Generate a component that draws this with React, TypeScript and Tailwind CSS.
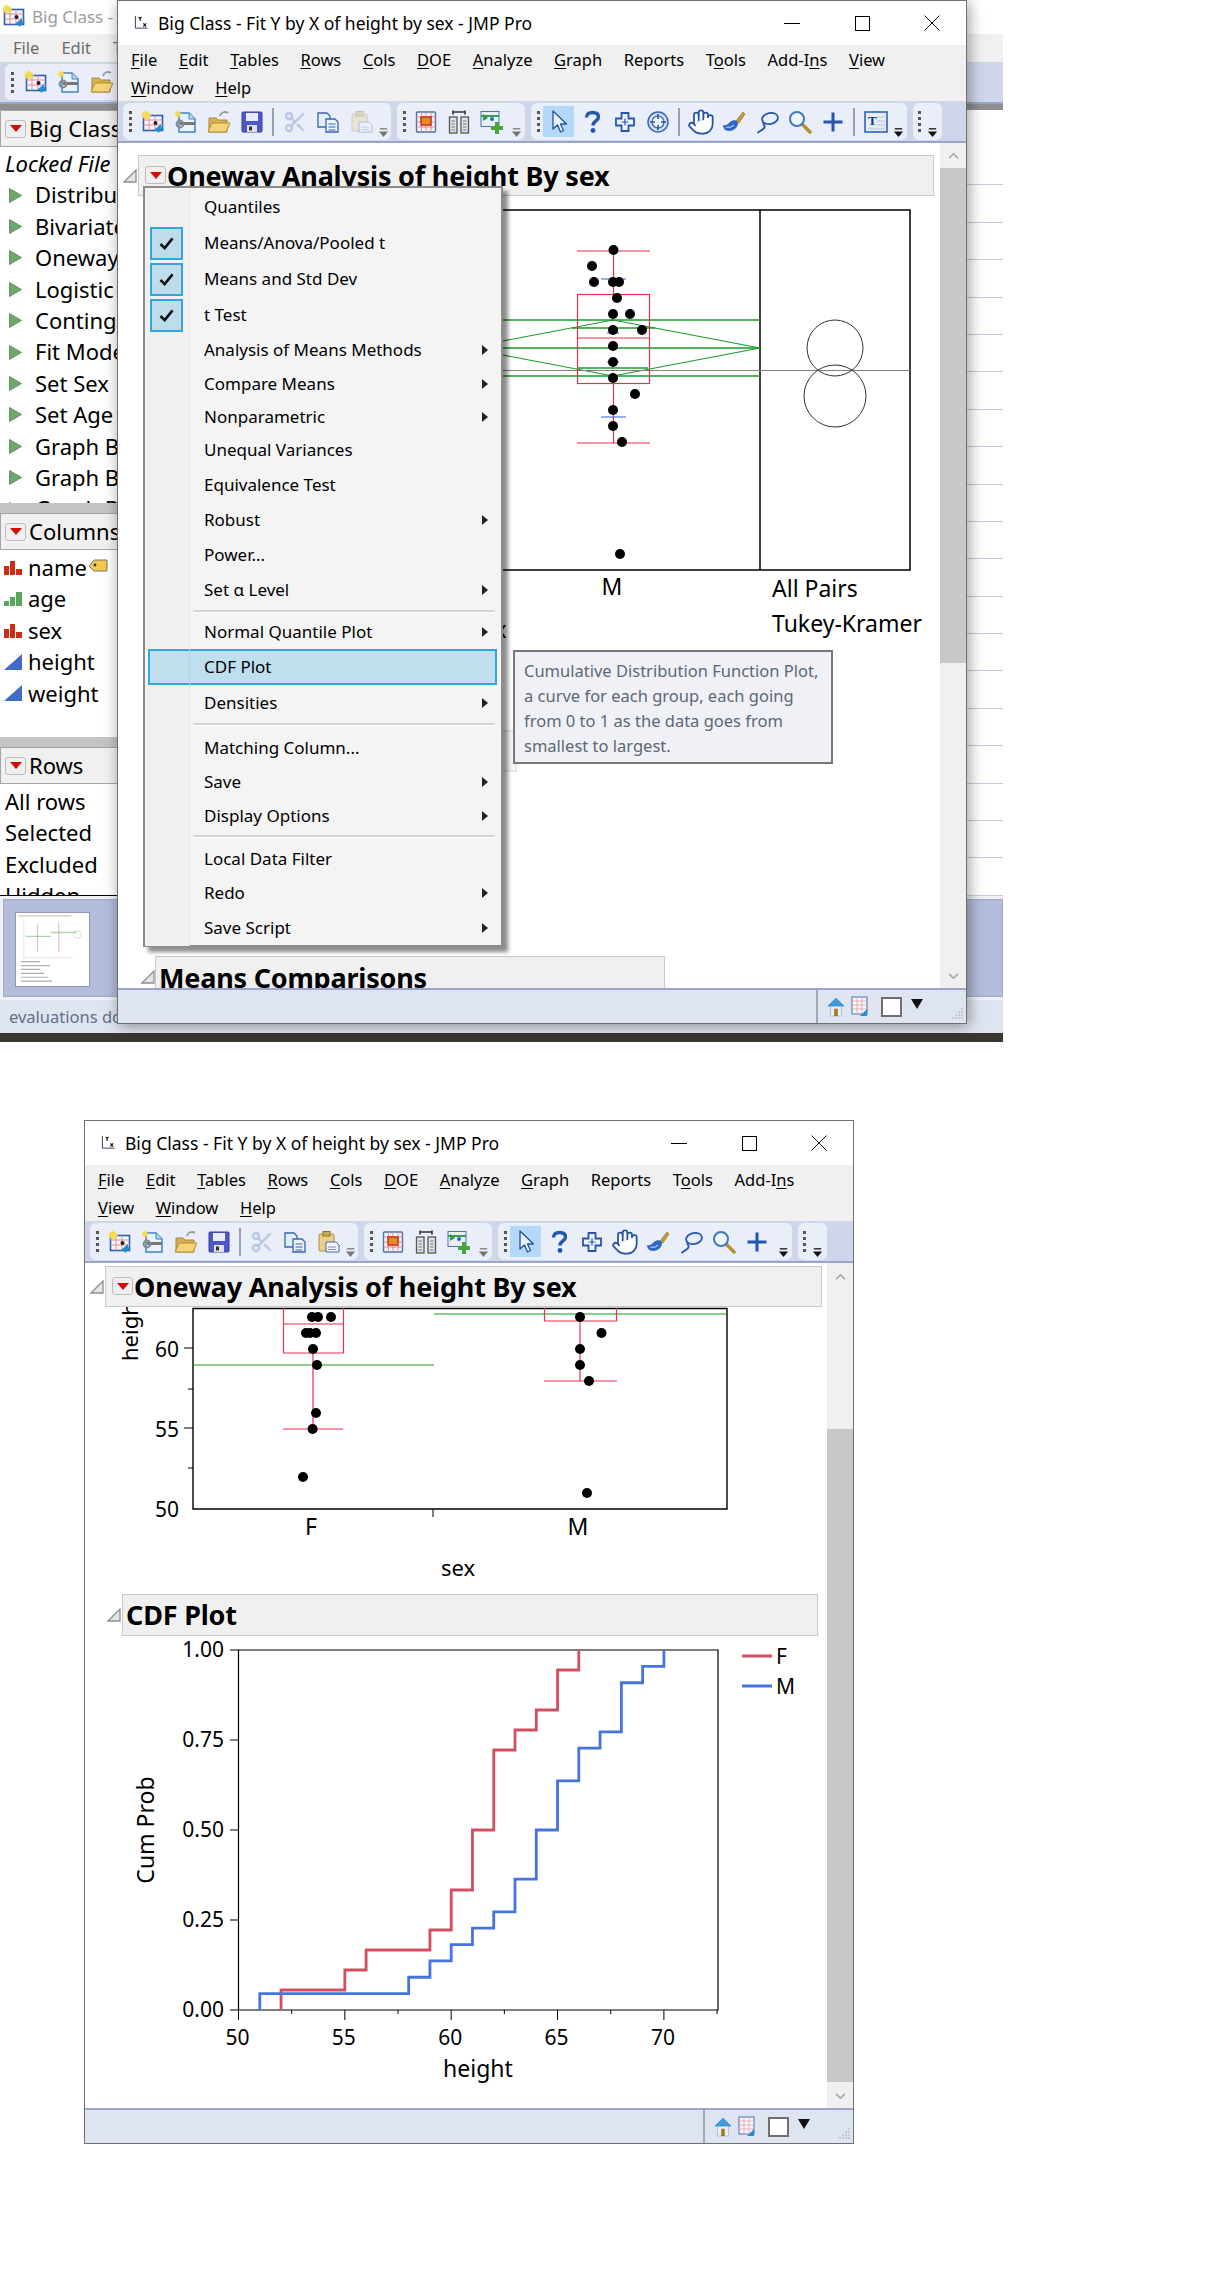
import type { ReactNode } from "react";
import { Hand, Scissors } from "lucide-react";

const uiFont = "font-['Noto_Sans',sans-serif]";

// ---------- toolbar icons ----------
function NewTableIcon() {
  return (
    <svg viewBox="0 0 24 24" className="w-6 h-6">
      <rect x="2.5" y="5.5" width="19" height="15" fill="#f4f6fb" stroke="#2a5fb0" strokeWidth="1.6" />
      <path d="M2.5 10h19M2.5 15h19M8 5.5v15M14 5.5v15" stroke="#e58a96" strokeWidth="1" />
      <circle cx="14.5" cy="13" r="2" fill="#222" />
      <path d="M13 20l7-6v3l3 1-6 5-1-3z" fill="#1f8fcf" />
      <path d="M5 0l1.4 2.6L9 1.5 8 4l2.5 1.3L8 6.5 9 9 6.4 7.9 5 10.5 3.6 7.9 1 9l1-2.5L0 5.3 2 4 1 1.5l2.6 1.1z" fill="#f6d94e" />
    </svg>
  );
}
function ImportIcon() {
  return (
    <svg viewBox="0 0 24 24" className="w-6 h-6">
      <path d="M5 3h10l6 6v13H5z" fill="#eaf2fb" stroke="#3b86c4" strokeWidth="1.5" />
      <path d="M15 3v6h6" fill="#bcd9f0" stroke="#3b86c4" strokeWidth="1" />
      <rect x="6" y="12" width="15" height="3" fill="#777" />
      <circle cx="6" cy="14" r="3.4" fill="none" stroke="#888" strokeWidth="2" />
      <path d="M4 0l1 2 2-1-1 2 2 1-2 1 1 2-2-1-1 2-1-2-2 1 1-2-2-1 2-1-1-2 2 1z" fill="#f6d94e" />
    </svg>
  );
}
function FolderIcon() {
  return (
    <svg viewBox="0 0 24 24" className="w-6 h-6">
      <path d="M13 6c1-4 5-5 8-3" fill="none" stroke="#9a9a9a" strokeWidth="1.8" />
      <path d="M2 8h7l2 2h9v12H2z" fill="#d9b04e" stroke="#a9883a" strokeWidth="1" />
      <path d="M1 22l4-9h18l-4 9z" fill="#f5d477" stroke="#b08d3a" strokeWidth="1" />
    </svg>
  );
}
function SaveIcon() {
  return (
    <svg viewBox="0 0 24 24" className="w-6 h-6">
      <rect x="2" y="2" width="20" height="20" rx="1" fill="#4f57c6" stroke="#3a3f9c" />
      <rect x="6" y="3" width="12" height="8" fill="#e9ecfb" />
      <rect x="7" y="15" width="10" height="7" fill="#dfe2ee" />
      <rect x="9" y="16.5" width="3" height="4" fill="#333" />
    </svg>
  );
}
function CopyIcon() {
  return (
    <svg viewBox="0 0 24 24" className="w-6 h-6">
      <path d="M2 3h9l3 3v11H2z" fill="#e5edf9" stroke="#3565b5" strokeWidth="1.3" />
      <path d="M10 9h9l3 3v10H10z" fill="#eef3fb" stroke="#3565b5" strokeWidth="1.3" />
      <path d="M12.5 14h7M12.5 17h7M12.5 20h7" stroke="#3565b5" strokeWidth="1.2" />
    </svg>
  );
}
function PasteIcon({ dim }: { dim: boolean }) {
  return (
    <svg viewBox="0 0 24 24" className={dim ? "w-6 h-6 opacity-35" : "w-6 h-6"}>
      <rect x="3" y="4" width="15" height="17" rx="1" fill="#e9cf8a" stroke="#a98d45" />
      <rect x="7" y="1.5" width="7" height="4.5" fill="#c8a956" stroke="#8b7336" />
      <path d="M10 12h10l3 3v7H10z" fill="#f2f4fa" stroke="#4a6aa8" />
      <path d="M12 17h8M12 19.5h8" stroke="#7f8fb5" />
    </svg>
  );
}
function DataViewIcon() {
  return (
    <svg viewBox="0 0 24 24" className="w-6 h-6">
      <rect x="2.5" y="2" width="19" height="20" rx="1" fill="#f3f3f8" stroke="#4a70b5" strokeWidth="1.4" />
      <path d="M2.5 7h19M2.5 12h19M2.5 17h19M7.5 2v20M12 2v20M17 2v20" stroke="#e28a90" strokeWidth="1" />
      <rect x="7" y="7" width="10" height="8" fill="#ea8a24" stroke="#c8321e" strokeWidth="1.5" />
    </svg>
  );
}
function ColumnsIcon() {
  return (
    <svg viewBox="0 0 24 24" className="w-6 h-6">
      <path d="M6 2h12M6 0.5v4M18 0.5v4" stroke="#333" strokeWidth="1.6" />
      <rect x="2.5" y="7" width="7.5" height="16" fill="#dfe3e8" stroke="#555" strokeWidth="1.3" />
      <rect x="14" y="7" width="7.5" height="16" fill="#dfe3e8" stroke="#555" strokeWidth="1.3" />
      <path d="M4.5 11h3.5M4.5 14h3.5M4.5 17h3.5M4.5 20h3.5M16 11h3.5M16 14h3.5M16 17h3.5M16 20h3.5" stroke="#777" />
    </svg>
  );
}
function AddDataIcon() {
  return (
    <svg viewBox="0 0 24 24" className="w-6 h-6">
      <rect x="1" y="1.5" width="18" height="15" fill="#e6eef8" stroke="#4a70b5" />
      <path d="M1 6h18" stroke="#3c9a4c" strokeWidth="2" />
      <path d="M3 4l5 4-5 3z" fill="#2f9a4a" />
      <circle cx="12" cy="9" r="2" fill="#1f6fb8" />
      <path d="M15 12h4v4h4v4h-4v4h-4v-4h-4v-4h4z" fill="#4aa53a" />
    </svg>
  );
}
function PointerIcon() {
  return (
    <svg viewBox="0 0 24 24" className="w-6 h-6">
      <path d="M6 1v18l4.5-4 3 7 3-1.5-3-6.5h6z" fill="#e8f1fb" stroke="#24529f" strokeWidth="1.3" strokeLinejoin="round" />
    </svg>
  );
}
function HelpIcon() {
  return (
    <svg viewBox="0 0 24 24" className="w-6 h-6">
      <path d="M6.5 7.5C6.5 4 9 2.5 12.5 2.5S18.5 4 18.5 7c0 4-5.5 4-5.5 8.5" fill="none" stroke="#2456ad" strokeWidth="3.4" />
      <circle cx="13" cy="20.5" r="2.4" fill="#2456ad" />
    </svg>
  );
}
function CrosshairIcon() {
  return (
    <svg viewBox="0 0 24 24" className="w-6 h-6">
      <path d="M8.5 3h7v5.5H21v7h-5.5V21h-7v-5.5H3v-7h5.5z" fill="#eef4fc" stroke="#2456ad" strokeWidth="1.8" />
      <path d="M8.5 12h7M12 8.5v7" stroke="#2456ad" strokeWidth="1.2" />
    </svg>
  );
}
function TargetIcon() {
  return (
    <svg viewBox="0 0 24 24" className="w-6 h-6">
      <circle cx="12" cy="12" r="10" fill="#cfe0f5" stroke="#3566b5" strokeWidth="1.5" />
      <circle cx="12" cy="12" r="6" fill="#f2f6fc" stroke="#3566b5" strokeWidth="1.2" />
      <path d="M12 4v5M12 15v5M4 12h5M15 12h5" stroke="#24529f" strokeWidth="1.6" />
    </svg>
  );
}
function BrushIcon() {
  return (
    <svg viewBox="0 0 24 24" className="w-6 h-6">
      <path d="M14 11L21 2l2 2-6 9z" fill="#c59a3a" stroke="#8c6b22" strokeWidth="0.6" />
      <path d="M1 15c3 1 5-1 7-3 3-3 8-2 8 1 0 5-5 8-9 8-4 0-6-3-6-6z" fill="#2d68c4" />
      <path d="M4 17c3 1 6 0 8-2" stroke="#a9c8ef" strokeWidth="1.2" fill="none" />
    </svg>
  );
}
function LassoIcon() {
  return (
    <svg viewBox="0 0 24 24" className="w-6 h-6">
      <ellipse cx="15" cy="8.5" rx="8" ry="5.5" fill="none" stroke="#2456ad" strokeWidth="1.8" transform="rotate(-12 15 8.5)" />
      <path d="M8.5 12c-1 3 2 3 1 5.5-1 2-4 3-7 5.5" fill="none" stroke="#2456ad" strokeWidth="1.8" />
    </svg>
  );
}
function MagnifierIcon() {
  return (
    <svg viewBox="0 0 24 24" className="w-6 h-6">
      <path d="M14 14l8 8" stroke="#b98f33" strokeWidth="3.6" strokeLinecap="round" />
      <circle cx="9" cy="9" r="7" fill="#eef5fc" stroke="#3f78c2" strokeWidth="2" />
    </svg>
  );
}
function PlusIcon() {
  return (
    <svg viewBox="0 0 24 24" className="w-6 h-6">
      <path d="M12 2.5v19M2.5 12h19" stroke="#2456ad" strokeWidth="3" />
    </svg>
  );
}
function TextBoxIcon() {
  return (
    <svg viewBox="0 0 24 24" className="w-6 h-6">
      <rect x="1" y="2" width="22" height="20" fill="#e3ecf7" stroke="#2f64b5" strokeWidth="1.6" />
      <path d="M13 7h8M13 11h8M13 15h8M4 19h17" stroke="#b8c8de" />
      <text x="4" y="15" fontSize="13" fontWeight="700" fill="#123a86" fontFamily="Liberation Serif, serif">T</text>
    </svg>
  );
}

function Grip() {
  return (
    <div className="w-[3px] mx-[1px] shrink-0 flex flex-col gap-[3px]">
      <div className="h-[3px] bg-[#555]" />
      <div className="h-[3px] bg-[#555]" />
      <div className="h-[3px] bg-[#555]" />
      <div className="h-[3px] bg-[#555]" />
    </div>
  );
}

function Overflow({ dark }: { dark: boolean }) {
  return (
    <svg viewBox="0 0 12 12" className="w-[11px] h-[11px] self-end mb-[2px]">
      <path d="M2 2h8" stroke={dark ? "#111" : "#777"} strokeWidth="1.4" />
      <path d="M1 5h10l-5 6z" fill={dark ? "#111" : "#777"} />
    </svg>
  );
}

function Slot({ children, active }: { children: ReactNode; active?: boolean }) {
  return (
    <div className={active ? "w-[31px] h-[31px] mx-[1px] flex items-center justify-center bg-[#b5d7f8]" : "w-[33px] h-[31px] flex items-center justify-center"}>
      {children}
    </div>
  );
}

function ToolSep() {
  return <div className="w-[2px] h-[28px] mx-[4px] bg-[#9aa0ad]" />;
}

function ToolGroup({ className, children }: { className: string; children: ReactNode }) {
  return <div className={`h-[37px] rounded-md bg-[#e9eef8] flex items-center ${className}`}>{children}</div>;
}

function Toolbar({ full }: { full: boolean }) {
  return (
    <div className="h-[42px] shrink-0 bg-[#cfd6ea] border-b-[2px] border-[#99a5cb] pt-[2px] flex gap-[6px] pl-[5px]">
      <ToolGroup className="w-[268px] pl-[5px]">
        <Grip />
        <div className="ml-[3px] flex items-center">
          <Slot><NewTableIcon /></Slot>
          <Slot><ImportIcon /></Slot>
          <Slot><FolderIcon /></Slot>
          <Slot><SaveIcon /></Slot>
          <ToolSep />
          <Slot><Scissors className="w-6 h-6 text-[#b9c8e6]" strokeWidth={2.4} /></Slot>
          <Slot><CopyIcon /></Slot>
          <Slot><PasteIcon dim={full} /></Slot>
        </div>
        <div className="ml-auto mr-[2px] self-stretch flex"><Overflow dark={false} /></div>
      </ToolGroup>
      <ToolGroup className="w-[128px] pl-[5px]">
        <Grip />
        <div className="ml-[2px] flex items-center">
          <Slot><DataViewIcon /></Slot>
          <Slot><ColumnsIcon /></Slot>
          <Slot><AddDataIcon /></Slot>
        </div>
        <div className="ml-auto mr-[3px] self-stretch flex"><Overflow dark={false} /></div>
      </ToolGroup>
      <ToolGroup className={full ? "w-[376px] pl-[5px]" : "w-[294px] pl-[5px]"}>
        <Grip />
        <div className="ml-[1px] flex items-center">
          <Slot active><PointerIcon /></Slot>
          <Slot><HelpIcon /></Slot>
          <Slot><CrosshairIcon /></Slot>
          {full && <Slot><TargetIcon /></Slot>}
          {full && <ToolSep />}
          <Slot><Hand className="w-[28px] h-[28px] text-[#24529f]" fill="#fff" strokeWidth={1.5} /></Slot>
          <Slot><BrushIcon /></Slot>
          <Slot><LassoIcon /></Slot>
          <Slot><MagnifierIcon /></Slot>
          <Slot><PlusIcon /></Slot>
          {full && <ToolSep />}
          {full && <Slot><TextBoxIcon /></Slot>}
        </div>
        <div className="ml-auto mr-[3px] self-stretch flex"><Overflow dark /></div>
      </ToolGroup>
      <ToolGroup className="w-[29px] pl-[4px]">
        <Grip />
        <div className="ml-auto mr-[4px] self-stretch flex"><Overflow dark /></div>
      </ToolGroup>
    </div>
  );
}

// ---------- window chrome ----------
const menuItems: [string, string, string][] = [
  ["", "F", "ile"],
  ["", "E", "dit"],
  ["", "T", "ables"],
  ["", "R", "ows"],
  ["", "C", "ols"],
  ["", "D", "OE"],
  ["", "A", "nalyze"],
  ["", "G", "raph"],
  ["Reports", "", ""],
  ["T", "o", "ols"],
  ["Add-I", "n", "s"],
  ["", "V", "iew"],
  ["", "W", "indow"],
  ["", "H", "elp"],
];

function TitleBar() {
  return (
    <div className="h-[44px] shrink-0 bg-white flex items-center pl-[16px]">
      <svg viewBox="0 0 16 16" className="w-[15px] h-[15px] mb-[2px]">
        <path d="M1.5 1v13h13" fill="none" stroke="#2b3a55" strokeWidth="1" />
        <path d="M5 2l1.5 2 1.5-2M6.5 4v2.5" fill="none" stroke="#111" strokeWidth="1.2" />
        <path d="M10 9l3 3.5M13 9l-3 3.5" stroke="#111" strokeWidth="1.2" />
      </svg>
      <span className="ml-[9px] text-[17.5px] whitespace-nowrap">Big Class - Fit Y by X of height by sex - JMP Pro</span>
      <div className="ml-auto flex">
        <div className="w-[70px] h-[44px] flex items-center justify-center"><div className="w-[16px] h-[1px] bg-black" /></div>
        <div className="w-[70px] h-[44px] flex items-center justify-center"><div className="w-[15px] h-[15px] border border-black" /></div>
        <div className="w-[69px] h-[44px] flex items-center justify-center">
          <svg viewBox="0 0 16 16" className="w-[16px] h-[16px]"><path d="M0.5 0.5l15 15M15.5 0.5l-15 15" stroke="#111" /></svg>
        </div>
      </div>
    </div>
  );
}

function MenuBar() {
  return (
    <div className="h-[56px] shrink-0 bg-[#f0f0f0] pl-[13px] pr-[5px] flex flex-wrap content-start gap-x-[21.6px] text-[16.5px] leading-[28px] pt-[1px]">
      {menuItems.map((m) => (
        <span key={m[0] + m[1] + m[2]}>
          {m[0]}
          {m[1] && <u className="underline-offset-2">{m[1]}</u>}
          {m[2]}
        </span>
      ))}
    </div>
  );
}

function StatusBar() {
  return (
    <div className="h-[35px] shrink-0 bg-[#dfe5f0] border-t-[2px] border-[#99a5cb] flex justify-end items-stretch">
      <div className="w-[150px] border-l-2 border-[#a3a8b5] flex items-center relative">
        <svg viewBox="0 0 20 22" className="ml-[9px] w-[18px] h-[20px]">
          <rect x="4" y="9" width="12" height="12" fill="#e8eef6" stroke="#8aa9c8" strokeWidth="0.6" />
          <path d="M10 1L1 10h18z" fill="#3f9be0" stroke="#1b6fb5" strokeWidth="0.5" />
          <rect x="8" y="13" width="4" height="8" fill="#a9761c" />
        </svg>
        <svg viewBox="0 0 18 22" className="ml-[6px] w-[18px] h-[22px]">
          <rect x="1" y="1" width="15" height="17" fill="#f5f6fa" stroke="#4a70b5" />
          <path d="M1 5h15M1 9h15M1 13h15M6 1v17M11 1v17" stroke="#e59aa0" strokeWidth="0.7" />
          <path d="M9 20l7-7v7z" fill="#1f8fcf" />
        </svg>
        <div className="ml-[12px] w-[21px] h-[20px] bg-white border-2 border-[#6f6f6f]" />
        <svg viewBox="0 0 12 10" className="ml-[9px] mb-[6px] w-[12px] h-[10px]"><path d="M0 0h12L6 10z" fill="#111" /></svg>
        <svg viewBox="0 0 16 16" className="absolute right-[1px] bottom-[1px] w-[16px] h-[16px]" fill="#c4c9d4">
          <rect x="12" y="2" width="2" height="2" /><rect x="9" y="5" width="2" height="2" /><rect x="12" y="5" width="2" height="2" />
          <rect x="6" y="8" width="2" height="2" /><rect x="9" y="8" width="2" height="2" /><rect x="12" y="8" width="2" height="2" />
          <rect x="3" y="11" width="2" height="2" /><rect x="6" y="11" width="2" height="2" /><rect x="9" y="11" width="2" height="2" /><rect x="12" y="11" width="2" height="2" />
        </svg>
      </div>
    </div>
  );
}

function Chevron({ down }: { down?: boolean }) {
  return (
    <svg viewBox="0 0 12 8" className="w-[11px] h-[7px] mx-auto">
      <path d={down ? "M1 1l5 5 5-5" : "M1 7l5-5 5 5"} fill="none" stroke="#a6a6a6" strokeWidth="1.8" />
    </svg>
  );
}

function Disclosure({ className }: { className: string }) {
  return (
    <svg viewBox="0 0 14 14" className={`w-[14px] h-[14px] shrink-0 ${className}`}>
      <path d="M13 1v12H1z" fill="#e6e6e6" stroke="#8e8e8e" strokeWidth="1.3" />
    </svg>
  );
}

function RedButton() {
  return (
    <div className="w-[21px] h-[18px] shrink-0 rounded-[3px] border border-[#bdbdbd] bg-[#efefef] flex items-center justify-center">
      <svg viewBox="0 0 12 7" className="w-[12px] h-[7px]"><path d="M0 0h12L6 7z" fill="#d40b0b" /></svg>
    </div>
  );
}

function OutlineTitle({ children }: { children: ReactNode }) {
  return <span className="font-bold text-[27px] leading-none whitespace-nowrap tracking-[-0.2px]">{children}</span>;
}

// ---------- background window ----------
const bgTables = ["Distribution", "Bivariate", "Oneway", "Logistic", "Contingency", "Fit Model", "Set Sex", "Set Age", "Graph Builder", "Graph Builder", "Graph Builder"];

function PanelHeader({ label }: { label: string }) {
  return (
    <div className="h-[37px] shrink-0 bg-[#f0f0f0] border border-[#a5a5a5] flex items-center gap-[3px] pl-[4px] text-[22px]">
      <RedButton />
      <span className="whitespace-nowrap">{label}</span>
    </div>
  );
}

function NominalIcon({ color }: { color: string }) {
  return (
    <svg viewBox="0 0 18 16" className="w-[18px] h-[16px] shrink-0">
      <rect x="0" y="6" width="5" height="9" fill={color} />
      <rect x="6" y="1" width="5" height="14" fill={color} />
      <rect x="12" y="9" width="6" height="6" fill={color} />
    </svg>
  );
}

function OrdinalIcon() {
  return (
    <svg viewBox="0 0 18 16" className="w-[18px] h-[16px] shrink-0">
      <rect x="0" y="10" width="5" height="5" fill="#58a55c" />
      <rect x="6" y="6" width="5" height="9" fill="#58a55c" />
      <rect x="12" y="1" width="6" height="14" fill="#58a55c" />
    </svg>
  );
}

function ContinuousIcon() {
  return (
    <svg viewBox="0 0 18 16" className="w-[18px] h-[16px] shrink-0">
      <path d="M18 0v16H0z" fill="#3f6cc6" />
    </svg>
  );
}

function BackgroundWindow() {
  return (
    <div className="absolute left-0 top-0 w-[1003px] flex flex-col text-black">
      <div className="h-[34px] bg-white flex items-center pl-[2px]">
        <div className="w-[24px] h-[26px]"><NewTableIcon /></div>
        <span className="ml-[6px] text-[17px] text-[#9c9c9c] whitespace-nowrap">Big Class -</span>
      </div>
      <div className="h-[28px] bg-[#f0f0f0] pl-[13px] flex gap-[22px] text-[16.5px] leading-[28px] text-[#6b6b6b]">
        <span>File</span>
        <span>Edit</span>
        <span>Tables</span>
      </div>
      <div className="h-[42px] bg-[#cfd6ea] border-b-2 border-[#99a5cb] pl-[5px] pt-[2px]">
        <div className="h-[36px] w-[180px] rounded-md bg-[#e9eef8] flex items-center pl-[5px]">
          <Grip />
          <div className="ml-[4px] flex">
            <Slot><NewTableIcon /></Slot>
            <Slot><ImportIcon /></Slot>
            <Slot><FolderIcon /></Slot>
          </div>
        </div>
      </div>
      <div className="h-[6px] bg-[#8f8f8f]" />
      <div className="h-[786px] flex justify-between">
        <div className="w-[200px] flex flex-col text-[22px] leading-[31.4px]">
          <div className="h-[393px] overflow-hidden">
            <PanelHeader label="Big Class" />
            <div className="pl-[5px] pt-[1px] italic whitespace-nowrap">Locked File</div>
            {bgTables.map((t, i) => (
              <div key={i} className="flex items-center pl-[9px] gap-[13px] whitespace-nowrap">
                <svg viewBox="0 0 13 15" className="w-[13px] h-[15px] shrink-0"><path d="M0.5 0.5L12.5 7.5 0.5 14.5z" fill="#6aa868" stroke="#6f8f6c" /></svg>
                <span>{t}</span>
              </div>
            ))}
          </div>
          <div className="h-[10px] shrink-0 bg-[#c4c4c4]" />
          <div className="h-[224px] overflow-hidden">
            <PanelHeader label="Columns" />
            <div className="pt-[2px] pl-[4px]">
              <div className="flex items-center gap-[6px]">
                <NominalIcon color="#cc2e12" />
                <span>name</span>
                <svg viewBox="0 0 20 14" className="w-[20px] h-[14px] -ml-[5px] mb-[4px]">
                  <path d="M6 1h13v11H6L1 7z" fill="#f2c94c" stroke="#777" />
                  <circle cx="7" cy="6" r="1.4" fill="#333" />
                </svg>
              </div>
              <div className="flex items-center gap-[6px]"><OrdinalIcon /><span>age</span></div>
              <div className="flex items-center gap-[6px]"><NominalIcon color="#cc2e12" /><span>sex</span></div>
              <div className="flex items-center gap-[6px]"><ContinuousIcon /><span>height</span></div>
              <div className="flex items-center gap-[6px]"><ContinuousIcon /><span>weight</span></div>
            </div>
          </div>
          <div className="h-[10px] shrink-0 bg-[#c4c4c4]" />
          <div className="h-[149px] overflow-hidden border-b border-black">
            <PanelHeader label="Rows" />
            <div className="pl-[5px] pt-[2px]">
              <div>All rows</div>
              <div>Selected</div>
              <div>Excluded</div>
              <div>Hidden</div>
            </div>
          </div>
        </div>
        <div className="w-[36px] pt-[38px]">
          {Array.from({ length: 20 }).map((_, i) => (
            <div key={i} className="h-[37.4px] border-b border-[#c9cbdc]" />
          ))}
        </div>
      </div>
      <div className="h-[104px] bg-[#edf0f6] pl-[3px] pt-[3px] pb-[3px]">
        <div className="h-full bg-[#b3bcda] border border-[#a2a8c6] pl-[11px] pt-[12px]">
          <svg viewBox="0 0 75 75" className="w-[75px] h-[75px] bg-white border border-[#8d95bd]">
            <rect x="2" y="2" width="55" height="2" fill="#ddd" />
            <path d="M8 8v38h50" fill="none" stroke="#ccc" strokeWidth="0.5" />
            <path d="M10 24h26M36 20h26" stroke="#a8d8b0" strokeWidth="1.5" />
            <path d="M22 12v28M44 10v30" stroke="#e0a0a0" strokeWidth="0.8" />
            <circle cx="63" cy="22" r="4" fill="none" stroke="#bbb" strokeWidth="0.5" />
            <path d="M5 50h20M5 54h30M5 58h20M5 62h24M5 66h28M5 70h32" stroke="#b0b0b0" strokeWidth="1.2" />
          </svg>
        </div>
      </div>
      <div className="h-[33px] bg-[#dfe5f0] pl-[9px] text-[16.5px] leading-[33px] text-[#62708a] whitespace-nowrap">evaluations done</div>
      <div className="h-[9px] bg-[#3a3630]" />
    </div>
  );
}

// ---------- popup menu ----------
type Row =
  | { sep: true; h: string; pt: string }
  | { sep?: false; label: string; h: string; check?: boolean; arrow?: boolean; hot?: boolean };

const popupRows: Row[] = [
  { label: "Quantiles", h: "h-[36px]" },
  { label: "Means/Anova/Pooled t", h: "h-[36px]", check: true },
  { label: "Means and Std Dev", h: "h-[36px]", check: true },
  { label: "t Test", h: "h-[36px]", check: true },
  { label: "Analysis of Means Methods", h: "h-[34px]", arrow: true },
  { label: "Compare Means", h: "h-[33px]", arrow: true },
  { label: "Nonparametric", h: "h-[33px]", arrow: true },
  { label: "Unequal Variances", h: "h-[34px]" },
  { label: "Equivalence Test", h: "h-[36px]" },
  { label: "Robust", h: "h-[34px]", arrow: true },
  { label: "Power...", h: "h-[35px]" },
  { label: "Set α Level", h: "h-[36px]", arrow: true },
  { sep: true, h: "h-[7px]", pt: "pt-[2px]" },
  { label: "Normal Quantile Plot", h: "h-[34px]", arrow: true },
  { label: "CDF Plot", h: "h-[36px]", hot: true },
  { label: "Densities", h: "h-[36px]", arrow: true },
  { sep: true, h: "h-[9px]", pt: "pt-[2px]" },
  { label: "Matching Column...", h: "h-[35px]" },
  { label: "Save", h: "h-[34px]", arrow: true },
  { label: "Display Options", h: "h-[33px]", arrow: true },
  { sep: true, h: "h-[10px]", pt: "pt-[3px]" },
  { label: "Local Data Filter", h: "h-[34px]" },
  { label: "Redo", h: "h-[34px]", arrow: true },
  { label: "Save Script", h: "h-[36px]", arrow: true },
];

function PopupMenu() {
  return (
    <div className="absolute left-[25px] top-[185px] w-[360px] h-[761px] z-20 bg-[#f4f4f4] border-2 border-[#8c8c8c] pt-[1px] text-[17px] shadow-[5px_5px_4px_rgba(0,0,0,0.45)]">
      {popupRows.map((r, i) => {
        if (r.sep) {
          return (
            <div key={i} className={`flex ${r.h}`}>
              <div className="w-[45px] shrink-0 bg-[#f0f0f0] border-r border-[#e4e4e4]" />
              <div className={`flex-1 ml-[3px] mr-[6px] ${r.pt}`}>
                <div className="h-[2px] bg-[#d4d4d4]" />
                <div className="h-[1px] bg-white" />
              </div>
            </div>
          );
        }
        return (
          <div key={i} className={r.hot ? `flex items-center ${r.h} relative` : `flex items-center ${r.h}`}>
            {r.hot && <div className="absolute left-[3px] right-[4px] top-0 bottom-0 bg-[#c0dfee] border-2 border-[#32a8e0]" />}
            <div className={r.hot ? "w-[45px] self-stretch shrink-0 border-r border-[#b6d2e0] relative" : "w-[45px] self-stretch shrink-0 bg-[#f0f0f0] border-r border-[#e4e4e4] flex items-center pl-[5px]"}>
              {r.check && (
                <div className="w-[33px] h-[33px] border-2 border-[#2fa6dd] bg-[#bedcec] flex items-center justify-center">
                  <svg viewBox="0 0 16 14" className="w-[15px] h-[13px]">
                    <path d="M1.5 7.5L6 12 14.5 1.5" fill="none" stroke="#111" strokeWidth="2.8" />
                  </svg>
                </div>
              )}
            </div>
            <span className="ml-[14px] relative whitespace-nowrap">{r.label}</span>
            {r.arrow && (
              <svg viewBox="0 0 6 10" className="ml-auto mr-[13px] w-[6px] h-[10px]"><path d="M0 0l6 5-6 5z" fill="#222" /></svg>
            )}
          </div>
        );
      })}
    </div>
  );
}

function Tooltip() {
  return (
    <div className="absolute left-[395px] top-[649px] w-[320px] h-[114px] z-30 bg-[#eff1f7] border-2 border-[#777] pl-[9px] pt-[6px] text-[16.5px] leading-[25px] text-[#5c6874] whitespace-nowrap">
      <div>Cumulative Distribution Function Plot,</div>
      <div>a curve for each group, each going</div>
      <div>from 0 to 1 as the data goes from</div>
      <div>smallest to largest.</div>
    </div>
  );
}

// ---------- charts ----------
const dotsTop: [number, number][] = [
  [613.5, 250], [592, 266], [594, 282], [613, 282], [619, 282], [617, 298], [613, 314], [630, 314],
  [613, 330], [642, 330], [613, 346], [613, 362], [613, 378], [635, 394], [613, 410], [613, 426], [622, 442], [620, 554],
];

function TopPlot() {
  return (
    <svg viewBox="118 196 822 760" className="block w-[822px] h-[760px] shrink-0">
      <rect x="480" y="731" width="36" height="40" fill="#f7f7f7" stroke="#d4d4d4" />
      <rect x="300" y="210" width="610" height="360" fill="none" stroke="#000" strokeWidth="1.5" />
      <path d="M760 210v360" stroke="#000" strokeWidth="1.5" />
      <path d="M300 320h460M300 348h460M300 376h460M572 328h83M578 368h70" stroke="#189a28" strokeWidth="1.3" />
      <path d="M466 348L613 320 760 348 613 376z" fill="none" stroke="#189a28" strokeWidth="1.2" />
      <path d="M300 370.5h610" stroke="#808080" strokeWidth="1" />
      <circle cx="835" cy="348" r="28" fill="none" stroke="#333" />
      <circle cx="835" cy="396" r="31" fill="none" stroke="#333" />
      <path d="M577 251h73M577 443h73M613.5 251v43M613.5 383v60" stroke="#e5314c" strokeWidth="1.2" />
      <rect x="577.5" y="294.5" width="72" height="89" fill="none" stroke="#e5314c" strokeWidth="1.2" />
      <path d="M577 338h72" stroke="#e5314c" strokeWidth="1.2" />
      <path d="M601 279h25M601 417h25M607 333h12M607 362h12" stroke="#2e62d8" strokeWidth="1.2" />
      {dotsTop.map((d, i) => (
        <circle key={i} cx={d[0]} cy={d[1]} r="5" fill="#000" />
      ))}
      <text x="612" y="595" fontSize="23" textAnchor="middle">M</text>
      <text x="772" y="597" fontSize="23">All Pairs</text>
      <text x="772" y="632" fontSize="23">Tukey-Kramer</text>
      <text x="471" y="638" fontSize="23">sex</text>
    </svg>
  );
}

const dotsF: [number, number][] = [
  [312, 1317], [318, 1317], [331, 1317], [306, 1333], [310, 1333], [316, 1333], [313, 1349], [317, 1365],
  [316, 1413], [312.6, 1429], [303, 1477],
];
const dotsM: [number, number][] = [[580, 1317], [601.5, 1333], [580, 1349], [580, 1365], [589, 1381], [587, 1493]];

function LowerPlot() {
  return (
    <svg viewBox="85 1307 742 287" className="block w-[742px] h-[287px] shrink-0">
      <text transform="translate(138 1361) rotate(-90)" fontSize="22">height</text>
      <path d="M193 1308.5H727V1509H193z" fill="none" stroke="#000" strokeWidth="1.4" />
      <path d="M184 1348h9M184 1428h9M188 1389h5M188 1468h5M433 1509v8" stroke="#000" />
      <text x="179" y="1357" fontSize="21" textAnchor="end">60</text>
      <text x="179" y="1437" fontSize="21" textAnchor="end">55</text>
      <text x="179" y="1517" fontSize="21" textAnchor="end">50</text>
      <path d="M193 1365h241M434 1314h293" stroke="#189a28" strokeWidth="1.2" />
      <path d="M283.5 1308v45h60v-45M283.5 1324h60M313 1353v76M283 1429h60" fill="none" stroke="#e5314c" strokeWidth="1.2" />
      <path d="M544.5 1308v13h72v-13M580 1321v60M544 1381h73" fill="none" stroke="#e5314c" strokeWidth="1.2" />
      {[...dotsF, ...dotsM].map((d, i) => (
        <circle key={i} cx={d[0]} cy={d[1]} r="5" fill="#000" />
      ))}
      <text x="311" y="1535" fontSize="23" textAnchor="middle">F</text>
      <text x="578" y="1535" fontSize="23" textAnchor="middle">M</text>
      <text x="458" y="1576" fontSize="22" textAnchor="middle">sex</text>
    </svg>
  );
}

const cdfF: [number, number][] = [
  [52, 1], [55, 2], [56, 3], [59, 4], [60, 6], [61, 9], [62, 13], [63, 14], [64, 15], [65, 17], [66, 18],
];
const cdfM: [number, number][] = [
  [51, 1], [58, 2], [59, 3], [60, 4], [61, 5], [62, 6], [63, 8], [64, 11], [65, 14], [66, 16], [67, 17], [68, 20], [69, 21], [70, 22],
];
const px = (h: number) => 238.5 + (h - 50) * 21.27;
const py = (p: number) => 2010 - p * 360;

function stepPath(steps: [number, number][], n: number) {
  let d = `M${px(steps[0][0])} ${py(0)}`;
  steps.forEach((s, i) => {
    d += `V${py(s[1] / n)}`;
    if (i < steps.length - 1) d += `H${px(steps[i + 1][0])}`;
  });
  return d;
}

function CdfChart() {
  const xMajor = [50, 55, 60, 65, 70];
  const xMinor = [52.5, 57.5, 62.5, 67.5, 72.5];
  const yTicks = [0, 0.25, 0.5, 0.75, 1];
  return (
    <svg viewBox="85 1636 742 472" className="block w-[742px] h-[472px] shrink-0">
      <path d="M238.5 1650H718V2010H238.5z" fill="none" stroke="#000" strokeWidth="1.2" />
      {xMajor.map((v) => (
        <g key={v}>
          <path d={`M${px(v)} 2010v10`} stroke="#000" />
          <text x={px(v) - 1} y="2045" fontSize="21" textAnchor="middle">{v}</text>
        </g>
      ))}
      {xMinor.map((v) => (
        <path key={v} d={`M${px(v)} 2010v4`} stroke="#000" />
      ))}
      {yTicks.map((v) => (
        <g key={v}>
          <path d={`M230 ${py(v)}h8.5`} stroke="#000" />
          <text x="224" y={py(v) + 7} fontSize="21" textAnchor="end">{v.toFixed(2)}</text>
        </g>
      ))}
      <path d={stepPath(cdfF, 18)} fill="none" stroke="#d14f60" strokeWidth="2.8" />
      <path d={stepPath(cdfM, 22)} fill="none" stroke="#4674de" strokeWidth="2.8" />
      <text transform="translate(154 1830) rotate(-90)" fontSize="23" textAnchor="middle">Cum Prob</text>
      <text x="478" y="2077" fontSize="23" textAnchor="middle">height</text>
      <path d="M742 1656h30" stroke="#d14f60" strokeWidth="3" />
      <path d="M742 1686h30" stroke="#4674de" strokeWidth="3" />
      <text x="776" y="1664" fontSize="21">F</text>
      <text x="776" y="1694" fontSize="21">M</text>
    </svg>
  );
}

// ---------- app ----------
export default function App() {
  return (
    <div className={`relative w-[1230px] h-[2286px] bg-white overflow-hidden text-black ${uiFont}`}>
      <BackgroundWindow />

      {/* front window with the popup */}
      <div className="absolute left-[117px] top-0 w-[850px] h-[1024px] flex flex-col bg-white border border-[#6f6f6f] shadow-[2px_2px_14px_rgba(0,0,0,0.4)]">
        <TitleBar />
        <MenuBar />
        <Toolbar full />
        <div className="flex-1 min-h-0 flex">
          <div className="w-[822px] overflow-hidden flex flex-col">
            <div className="flex items-center h-[41px] mt-[12px] shrink-0 pl-[5px]">
              <Disclosure className="mr-[1px]" />
              <div className="w-[796px] h-full bg-[#f0f0f0] border border-[#c9c9c9] flex items-center pl-[6px] gap-[1px] pb-[1px]">
                <RedButton />
                <OutlineTitle>Oneway Analysis of height By sex</OutlineTitle>
              </div>
            </div>
            <TopPlot />
            <div className="flex items-start h-[40px] shrink-0 pl-[23px]">
              <Disclosure className="mt-[14px]" />
              <div className="w-[510px] h-[40px] bg-[#f0f0f0] border border-[#c9c9c9] pl-[3px] pt-[7px]">
                <OutlineTitle>Means Comparisons</OutlineTitle>
              </div>
            </div>
          </div>
          <div className="flex-1 flex flex-col bg-[#f0f0f0]">
            <div className="h-[25px] pt-[9px]"><Chevron /></div>
            <div className="h-[495px] bg-[#c8c8c8]" />
            <div className="flex-1 flex flex-col justify-end pb-[8px]"><Chevron down /></div>
          </div>
        </div>
        <StatusBar />
        <PopupMenu />
        <Tooltip />
      </div>

      {/* second window, scrolled down to the CDF plot */}
      <div className="absolute left-[84px] top-[1120px] w-[770px] h-[1024px] flex flex-col bg-white border border-[#6f6f6f]">
        <TitleBar />
        <MenuBar />
        <Toolbar full={false} />
        <div className="flex-1 min-h-0 flex">
          <div className="w-[742px] overflow-hidden flex flex-col">
            <div className="flex items-center h-[41px] mt-[3px] shrink-0 pl-[5px]">
              <Disclosure className="mr-[1px]" />
              <div className="w-[717px] h-full bg-[#f0f0f0] border border-[#c9c9c9] flex items-center pl-[6px] gap-[1px] pb-[1px]">
                <RedButton />
                <OutlineTitle>Oneway Analysis of height By sex</OutlineTitle>
              </div>
            </div>
            <LowerPlot />
            <div className="flex items-center h-[42px] shrink-0 pl-[22px]">
              <Disclosure className="mr-[1px]" />
              <div className="w-[696px] h-full bg-[#f0f0f0] border border-[#c9c9c9] flex items-center pl-[3px] pb-[1px]">
                <OutlineTitle>CDF Plot</OutlineTitle>
              </div>
            </div>
            <CdfChart />
          </div>
          <div className="flex-1 flex flex-col bg-[#f0f0f0]">
            <div className="h-[166px] pt-[10px]"><Chevron /></div>
            <div className="h-[653px] bg-[#c8c8c8]" />
            <div className="flex-1 flex flex-col justify-end pb-[8px]"><Chevron down /></div>
          </div>
        </div>
        <StatusBar />
      </div>
    </div>
  );
}
